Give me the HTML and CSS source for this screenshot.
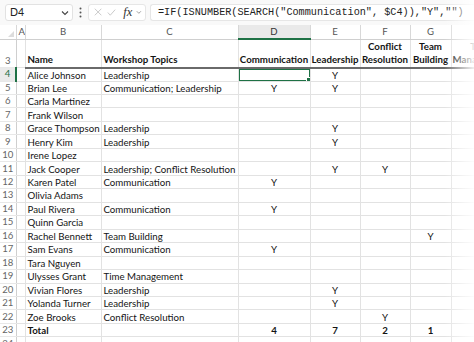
FILE: index.html
```html
<!DOCTYPE html>
<html>
<head>
<meta charset="utf-8">
<link rel="stylesheet" href="styles.css">
</head>
<body>
<div class="app">
  <div class="fbar">
    <div class="namebox">
      <span class="nb-text">D4</span>
      <svg class="chev" width="8" height="6" viewBox="0 0 8 6"><path d="M1 1.5 L4 4.5 L7 1.5" fill="none" stroke="#444" stroke-width="1.1"/></svg>
    </div>
    <div class="dots">
      <svg width="3" height="11" viewBox="0 0 3 11"><circle cx="1.5" cy="1.5" r="1" fill="#555"/><circle cx="1.5" cy="5.5" r="1" fill="#555"/><circle cx="1.5" cy="9.5" r="1" fill="#555"/></svg>
    </div>
    <div class="fxbox">
      <svg class="ic-x" width="10" height="10" viewBox="0 0 10 10"><path d="M1 1 L9 9 M9 1 L1 9" stroke="#c4c4c4" stroke-width="1.1"/></svg>
      <svg class="ic-ok" width="11" height="9" viewBox="0 0 11 9"><path d="M1 4.5 L4 7.8 L10 1" fill="none" stroke="#c4c4c4" stroke-width="1.1"/></svg>
      <span class="fx">fx</span>
      <svg class="chev2" width="7" height="5" viewBox="0 0 7 5"><path d="M1 1 L3.5 3.5 L6 1" fill="none" stroke="#888" stroke-width="1"/></svg>
    </div>
    <div class="formula">=IF(ISNUMBER(SEARCH("Communication", $C4)),"Y","")</div>
  </div>

  <table class="grid">
    <colgroup>
      <col class="c-rh"><col class="c-a"><col class="c-b"><col class="c-c"><col class="c-d"><col class="c-e"><col class="c-f"><col class="c-g"><col class="c-h">
    </colgroup>
    <tr class="colhdr">
      <th class="corner"><span class="tri"></span></th><th>A</th><th>B</th><th>C</th><th class="sel-col">D</th><th>E</th><th>F</th><th>G</th><th>H</th>
    </tr>
    <tr class="r3">
      <th class="rh">3</th><td></td><td class="h">Name</td><td class="h">Workshop Topics</td><td class="h ctr">Communication</td><td class="h ctr">Leadership</td><td class="h ctr">Conflict<br>Resolution</td><td class="h ctr">Team<br>Building</td><td class="h ctr">Time<br>Management</td>
    </tr>
    <tr><th class="rh sel-row">4</th><td></td><td>Alice Johnson</td><td>Leadership</td><td class="ctr active"></td><td class="ctr">Y</td><td></td><td></td><td></td></tr>
    <tr><th class="rh">5</th><td></td><td>Brian Lee</td><td>Communication; Leadership</td><td class="ctr">Y</td><td class="ctr">Y</td><td></td><td></td><td></td></tr>
    <tr><th class="rh">6</th><td></td><td>Carla Martinez</td><td></td><td></td><td></td><td></td><td></td><td></td></tr>
    <tr><th class="rh">7</th><td></td><td>Frank Wilson</td><td></td><td></td><td></td><td></td><td></td><td></td></tr>
    <tr><th class="rh">8</th><td></td><td>Grace Thompson</td><td>Leadership</td><td></td><td class="ctr">Y</td><td></td><td></td><td></td></tr>
    <tr><th class="rh">9</th><td></td><td>Henry Kim</td><td>Leadership</td><td></td><td class="ctr">Y</td><td></td><td></td><td></td></tr>
    <tr><th class="rh">10</th><td></td><td>Irene Lopez</td><td></td><td></td><td></td><td></td><td></td><td></td></tr>
    <tr><th class="rh">11</th><td></td><td>Jack Cooper</td><td>Leadership; Conflict Resolution</td><td></td><td class="ctr">Y</td><td class="ctr">Y</td><td></td><td></td></tr>
    <tr><th class="rh">12</th><td></td><td>Karen Patel</td><td>Communication</td><td class="ctr">Y</td><td></td><td></td><td></td><td></td></tr>
    <tr><th class="rh">13</th><td></td><td>Olivia Adams</td><td></td><td></td><td></td><td></td><td></td><td></td></tr>
    <tr><th class="rh">14</th><td></td><td>Paul Rivera</td><td>Communication</td><td class="ctr">Y</td><td></td><td></td><td></td><td></td></tr>
    <tr><th class="rh">15</th><td></td><td>Quinn Garcia</td><td></td><td></td><td></td><td></td><td></td><td></td></tr>
    <tr><th class="rh">16</th><td></td><td>Rachel Bennett</td><td>Team Building</td><td></td><td></td><td></td><td class="ctr">Y</td><td></td></tr>
    <tr><th class="rh">17</th><td></td><td>Sam Evans</td><td>Communication</td><td class="ctr">Y</td><td></td><td></td><td></td><td></td></tr>
    <tr><th class="rh">18</th><td></td><td>Tara Nguyen</td><td></td><td></td><td></td><td></td><td></td><td></td></tr>
    <tr><th class="rh">19</th><td></td><td>Ulysses Grant</td><td>Time Management</td><td></td><td></td><td></td><td></td><td></td></tr>
    <tr><th class="rh">20</th><td></td><td>Vivian Flores</td><td>Leadership</td><td></td><td class="ctr">Y</td><td></td><td></td><td></td></tr>
    <tr><th class="rh">21</th><td></td><td>Yolanda Turner</td><td>Leadership</td><td></td><td class="ctr">Y</td><td></td><td></td><td></td></tr>
    <tr><th class="rh">22</th><td></td><td>Zoe Brooks</td><td>Conflict Resolution</td><td></td><td></td><td class="ctr">Y</td><td></td><td></td></tr>
    <tr class="total"><th class="rh">23</th><td></td><td class="b">Total</td><td></td><td class="ctr b">4</td><td class="ctr b">7</td><td class="ctr b">2</td><td class="ctr b">1</td><td></td></tr>
    <tr><th class="rh">24</th><td></td><td></td><td></td><td></td><td></td><td></td><td></td><td></td></tr>
  </table>
  <div class="fade"></div>
</div>
</body>
</html>
```
FILE: styles.css
```css
* { box-sizing: border-box; }
html, body { margin: 0; padding: 0; background: #fff; }
.app {
  position: relative;
  width: 474px;
  height: 342px;
  overflow: hidden;
  font-family: Lato, "Liberation Sans", sans-serif;
  color: #141414;
}
.fbar {
  height: 25px;
  display: flex;
  align-items: center;
  padding: 0 0 1px 5px;
  background: #f9f9f9;
}
.namebox {
  width: 68px;
  height: 17px;
  background: #fff;
  border: 1px solid #e2e2e2;
  border-radius: 3px;
  display: flex;
  align-items: center;
  justify-content: space-between;
  padding: 0 3px 0 4px;
  font-size: 10.5px;
  color: #222;
}
.chev { margin-top: 1px; }
.dots {
  width: 15px;
  display: flex;
  justify-content: center;
  align-items: center;
}
.fxbox {
  width: 58px;
  height: 17px;
  background: #fff;
  border: 1px solid #e6e6e6;
  border-radius: 3px;
  display: flex;
  align-items: center;
  padding: 0 3px 0 5px;
  gap: 4px;
}
.ic-ok { margin-left: 1px; }
.fx {
  font-family: "Liberation Serif", serif;
  font-style: italic;
  font-size: 12.5px;
  color: #333;
  margin-left: 3px;
}
.formula {
  flex: 1;
  height: 17px;
  margin-left: 4px;
  background: #fff;
  border: 1px solid #e6e6e6;
  border-right: none;
  border-radius: 3px 0 0 3px;
  font-family: "Liberation Mono", monospace;
  font-size: 10.2px;
  line-height: 15px;
  padding-left: 7px;
  white-space: nowrap;
  overflow: hidden;
  color: #222;
}
.grid {
  border-collapse: collapse;
  table-layout: fixed;
  width: 511px;
  font-size: 9.7px;
}
.c-rh { width: 16px; }
.c-a { width: 9px; }
.c-b { width: 76px; }
.c-c { width: 137px; }
.c-d { width: 72px; }
.c-e { width: 50px; }
.c-f { width: 50px; }
.c-g { width: 41px; }
.c-h { width: 60px; }
.grid td, .grid th {
  padding: 0 2px;
  white-space: nowrap;
  overflow: hidden;
  border-right: 1px solid #e2e2e2;
  border-bottom: 1px solid #e2e2e2;
  height: 13.47px;
  line-height: 12px;
  text-align: left;
  font-weight: normal;
}
.grid .colhdr th {
  height: 13px;
  padding-top: 1px;
  text-align: center;
  color: #555;
  font-size: 9.6px;
  border-right: 1px solid #d8d8d8;
  border-bottom: 1px solid #cfcfcf;
  background: #fff;
}
.grid .colhdr th.corner { position: relative; }
.tri {
  position: absolute;
  right: 2px;
  bottom: 2px;
  width: 0; height: 0;
  border-left: 6px solid transparent;
  border-bottom: 6px solid #dcdcdc;
}
.grid .colhdr th.sel-col {
  background: #e9e9e9;
  border-bottom: 2px solid #1e7145;
  color: #333;
}
.grid th.rh {
  text-align: center;
  color: #666;
  font-size: 9.6px;
  padding: 0;
  border-right: 1px solid #cfcfcf;
  border-bottom: 1px solid #e8e8e8;
}
.grid th.sel-row {
  background: #eaeaea;
  color: #1e7145;
  border-right: 2px solid #1e7145;
}
.grid .r3 td, .grid .r3 th {
  height: 28.3px;
  vertical-align: bottom;
  line-height: 13.5px;
  padding-bottom: 0;
}
.grid .r3 td.h {
  font-weight: bold;
  border-bottom: 2px solid #6a6a6a;
}
.grid .r3 td.ctr { white-space: normal; overflow: visible; padding: 0; }
.ctr { text-align: center !important; }
.b { font-weight: bold !important; }
.grid td.active { position: relative; }
.grid td.active::before {
  content: "";
  position: absolute;
  left: -1px; top: -1px; right: -1px; bottom: -1px;
  border: 2px solid #1e7145;
}
.grid td.active::after {
  content: "";
  position: absolute;
  right: -3px; bottom: -3px;
  width: 5px; height: 5px;
  background: #1e7145;
  border: 1px solid #fff;
}
.fade {
  position: absolute;
  top: 0;
  right: 0;
  width: 30px;
  height: 342px;
  background: linear-gradient(to right, rgba(255,255,255,0), rgba(255,255,255,0.9));
  pointer-events: none;
}
```
